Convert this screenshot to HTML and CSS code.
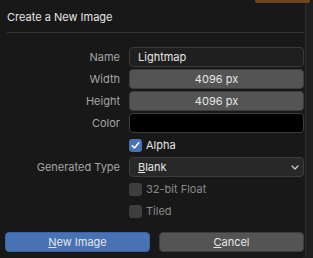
FILE: index.html
```html
<!DOCTYPE html>
<html lang="en">

<head>
    <meta charset="UTF-8">
    <meta name="viewport" content="width=device-width, initial-scale=1.0">
    <title>Create a New Image</title>
    <link rel="stylesheet" href="styles.css">
</head>

<body>
    <div class="topbar">
        <div class="topbar-fill"></div>
        <div class="topbar-accent"></div>
    </div>

    <div class="popup">
        <div class="popup-title">Create a New Image</div>
        <div class="popup-sep"></div>

        <div class="form">
            <div class="form-label">Name</div>
            <div class="field field-text">Lightmap</div>

            <div class="form-label">Width</div>
            <div class="field field-num">4096 px</div>

            <div class="form-label">Height</div>
            <div class="field field-num">4096 px</div>

            <div class="form-label">Color</div>
            <div class="field field-color"></div>

            <div class="form-label"></div>
            <label class="check">
                <span class="check-box checked">
                    <svg width="11" height="11" viewBox="0 0 11 11">
                        <path d="M2.2 5.8 L4.4 8 L8.8 2.8" fill="none" stroke="#ffffff" stroke-width="1.6" stroke-linecap="round" stroke-linejoin="round"/>
                    </svg>
                </span>
                <span class="check-text">Alpha</span>
            </label>

            <div class="form-label">Generated Type</div>
            <div class="field field-menu">
                <span><u>B</u>lank</span>
                <svg class="chevron" width="8" height="5" viewBox="0 0 8 5">
                    <path d="M1 1 L4 4 L7 1" fill="none" stroke="#d0d0d0" stroke-width="1.2" stroke-linecap="round" stroke-linejoin="round"/>
                </svg>
            </div>

            <div class="form-label"></div>
            <label class="check disabled">
                <span class="check-box"></span>
                <span class="check-text">32-bit Float</span>
            </label>

            <div class="form-label"></div>
            <label class="check disabled">
                <span class="check-box"></span>
                <span class="check-text">Tiled</span>
            </label>
        </div>

        <div class="actions">
            <button class="btn btn-primary"><u>N</u>ew Image</button>
            <button class="btn"><u>C</u>ancel</button>
        </div>
    </div>
</body>

</html>
```

FILE: styles.css
```css
html, body {
    margin: 0;
    padding: 0;
}

body {
    width: 313px;
    height: 258px;
    overflow: hidden;
    background-color: #1f1f1f;
    font-family: Inter, "DejaVu Sans", sans-serif;
    font-size: 11px;
    color: #e6e6e6;
}

.topbar {
    display: flex;
    height: 3px;
}

.topbar-fill {
    flex: 1;
    background-color: #191919;
}

.topbar-accent {
    width: 55px;
    margin-right: 3px;
    background-color: #6e4420;
    border-radius: 0 0 2px 2px;
}

.popup {
    width: 300px;
    height: 255px;
    padding: 0 0 0 5px;
    background-color: #181818;
    border-right: 1px solid #2b2b2b;
    border-radius: 0 0 4px 0;
    box-sizing: content-box;
}

.popup-title {
    height: 29px;
    padding-left: 2px;
    line-height: 29px;
    color: #e6e6e6;
}

.popup-sep {
    height: 1px;
    margin: 0 1px 0 2px;
    background-color: #353535;
}

.form {
    display: grid;
    grid-template-columns: 115px 175px;
    column-gap: 9px;
    row-gap: 2px;
    margin-top: 14px;
}

.form-label {
    height: 20px;
    line-height: 20px;
    text-align: right;
    color: #a6a6a6;
}

.field {
    height: 20px;
    box-sizing: border-box;
    border-radius: 4px;
    line-height: 18px;
}

.field-text {
    padding-left: 8px;
    background-color: #1f1f1f;
    border: 1px solid #3a3a3a;
}

.field-num {
    text-align: center;
    background-color: #545454;
    border: 1px solid #3d3d3d;
}

.field-color {
    background-color: #000000;
    border: 1px solid #3d3d3d;
}

.field-menu {
    display: flex;
    align-items: center;
    justify-content: space-between;
    padding: 0 4px 0 8px;
    background-color: #282828;
    border: 1px solid #3d3d3d;
}

.chevron {
    margin-top: 1px;
}

.check {
    display: flex;
    align-items: center;
    gap: 4px;
    height: 20px;
}

.check-box {
    display: flex;
    align-items: center;
    justify-content: center;
    width: 13px;
    height: 13px;
    border-radius: 3px;
    background-color: #545454;
}

.check-box.checked {
    background-color: #4772b3;
}

.check-text {
    color: #e6e6e6;
}

.check.disabled .check-box {
    background-color: #3e3e3e;
}

.check.disabled .check-text {
    color: #8a8a8a;
}

.actions {
    display: flex;
    gap: 9px;
    margin-top: 11px;
}

.btn {
    width: 145px;
    height: 20px;
    padding: 0;
    border: 1px solid #3d3d3d;
    border-radius: 4px;
    background-color: #545454;
    color: #e6e6e6;
    font-family: inherit;
    font-size: 11px;
    line-height: 18px;
}

.btn-primary {
    background-color: #4772b3;
    border-color: #3f62a0;
}
```
